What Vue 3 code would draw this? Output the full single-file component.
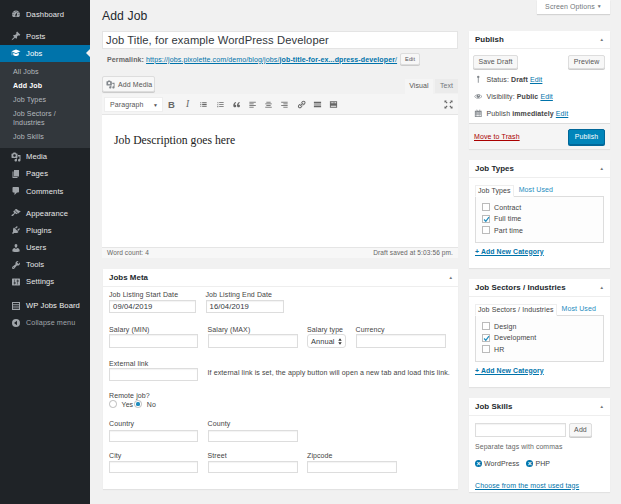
<script setup>
const ic = {
  dashboard: 'M3.76 16h12.48c1.1-1.37 1.76-3.11 1.76-5 0-4.42-3.58-8-8-8s-8 3.58-8 8c0 1.89.66 3.63 1.76 5zM10 4c.55 0 1 .45 1 1s-.45 1-1 1-1-.45-1-1 .45-1 1-1zM6 6c.55 0 1 .45 1 1s-.45 1-1 1-1-.45-1-1 .45-1 1-1zm8 0c.55 0 1 .45 1 1s-.45 1-1 1-1-.45-1-1 .45-1 1-1zm-5.37 5.55L12 7v6c0 1.1-.9 2-2 2s-2-.9-2-2c0-.57.24-1.08.63-1.45zM4 10c.55 0 1 .45 1 1s-.45 1-1 1-1-.45-1-1 .45-1 1-1zm12 0c.55 0 1 .45 1 1s-.45 1-1 1-1-.45-1-1 .45-1 1-1zm-5 3c0-.55-.45-1-1-1s-1 .45-1 1 .45 1 1 1 1-.45 1-1z',
  pin: 'M10.44 3.02l1.82-1.82 6.36 6.35-1.83 1.82c-1.05-.68-2.48-.57-3.41.36l-.75.75c-.92.93-1.04 2.35-.35 3.41l-1.83 1.82-2.41-2.41-2.8 2.79c-.42.42-3.38 2.71-3.8 2.29s1.86-3.39 2.28-3.81l2.79-2.79L4.1 9.36l1.83-1.82c1.05.69 2.48.57 3.4-.36l.75-.75c.93-.92 1.05-2.35.36-3.41z',
  learn: 'M10 10.5 1 6.5 10 3l9 3.5zM4.5 9.5 10 12l5.5-2.5V14c-1.5 1.5-3.5 2-5.5 2s-4-.5-5.5-2zM2.5 8v6.5h-1V7.5z',
  media: 'M13 11V4c0-.55-.45-1-1-1h-1.67L9 1H5L3.67 3H2c-.55 0-1 .45-1 1v7c0 .55.45 1 1 1h10c.55 0 1-.45 1-1zM7 4.5c1.38 0 2.5 1.12 2.5 2.5S8.38 9.5 7 9.5 4.5 8.38 4.5 7 5.62 4.5 7 4.5zM14 6h5v10.5c0 1.38-1.12 2.5-2.5 2.5S14 17.88 14 16.5s1.12-2.5 2.5-2.5c.17 0 .34.02.5.05V9h-3V6zm-4 8.05V13h2v3.5c0 1.38-1.12 2.5-2.5 2.5S7 17.88 7 16.5 8.12 14 9.5 14c.17 0 .34.02.5.05z',
  pages: 'M6 15V2h10v13H6zm-1 1h8v2H3V5h2v11z',
  comments: 'M5 2h9c1.1 0 2 .9 2 2v7c0 1.1-.9 2-2 2h-2l-5 5v-5H5c-1.1 0-2-.9-2-2V4c0-1.1.9-2 2-2z',
  brush: 'M14.48 11.06L7.41 3.99l1.5-1.5c.5-.56 2.3-.47 3.51.32 1.21.8 1.43 1.28 2.91 2.1 1.18.64 2.45 1.26 4.45.85zm-.71.71L6.7 4.7 4.93 6.47c-.39.39-.39 1.02 0 1.41l1.06 1.06c.39.39.39 1.03 0 1.42-.6.6-1.43 1.11-2.21 1.69-.35.26-.7.53-1.01.84C1.43 13.23.4 14.89 1.3 15.8c.9.9 2.57-.13 3.91-1.47.31-.31.58-.66.84-1.01.58-.78 1.09-1.61 1.69-2.21.39-.39 1.02-.39 1.41 0l1.06 1.06c.39.39 1.02.39 1.41 0z',
  plugins: 'M13.11 4.36L9.87 7.6 8 5.73l3.24-3.24c.35-.34 1.05-.2 1.56.32.52.51.66 1.21.31 1.55zm-8 1.77l.91-1.12 9.01 9.01-1.19.84c-.71.71-2.63 1.16-3.82 1.16H6.14L4.9 17.26c-.59.59-1.54.59-2.12 0-.59-.58-.59-1.53 0-2.12l1.24-1.24v-3.88c0-1.13.4-3.19 1.09-3.89zm7.26 3.97l3.24-3.24c.34-.35 1.04-.21 1.55.31.52.51.66 1.21.31 1.55l-3.24 3.25z',
  users: 'M10 9.25c-2.27 0-2.73-3.44-2.73-3.44C7 4.02 7.82 2 9.97 2c2.16 0 2.98 2.02 2.71 3.81 0 0-.41 3.44-2.68 3.44zm0 2.57L12.72 10c2.39 0 4.52 2.33 4.52 4.53v2.49s-3.65 1.13-7.24 1.13c-3.65 0-7.24-1.13-7.24-1.13v-2.49c0-2.25 1.94-4.48 4.47-4.48z',
  tools: 'M16.68 9.77c-1.34 1.34-3.3 1.67-4.95.99l-5.41 6.52c-.99.99-2.59.99-3.58 0s-.99-2.59 0-3.57l6.52-5.42c-.68-1.65-.35-3.61.99-4.95 1.28-1.28 3.12-1.62 4.72-1.06l-2.89 2.89 2.82 2.82 2.86-2.87c.53 1.58.18 3.39-1.08 4.65zM3.81 16.21c.4.39 1.04.39 1.43 0 .4-.4.4-1.04 0-1.43-.39-.4-1.03-.4-1.43 0-.39.39-.39 1.03 0 1.43z',
  settings: 'M18 16V4c0-.55-.45-1-1-1H3c-.55 0-1 .45-1 1v12c0 .55.45 1 1 1h14c.55 0 1-.45 1-1zM8 11h1c.55 0 1 .45 1 1s-.45 1-1 1H8v1.5c0 .28-.22.5-.5.5s-.5-.22-.5-.5V13H6c-.55 0-1-.45-1-1s.45-1 1-1h1V5.5c0-.28.22-.5.5-.5s.5.22.5.5V11zm5-2h-1c-.55 0-1-.45-1-1s.45-1 1-1h1V5.5c0-.28.22-.5.5-.5s.5.22.5.5V7h1c.55 0 1 .45 1 1s-.45 1-1 1h-1v5.5c0 .28-.22.5-.5.5s-.5-.22-.5-.5V9z',
  board: 'M2 2h16v16H2zM4 4v2h12V4zM4 7.5v2h12v-2zM4 11v2h12v-2zM4 14.5V16h12v-1.5z',
  collapse: 'M10 2a8 8 0 1 1 0 16 8 8 0 0 1 0-16zm2 3.5L6 10l6 4.5z',
  pinStatus: 'M10 1.5a3 3 0 0 1 1 5.8V18.5H9V7.3a3 3 0 0 1 1-5.8z',
  eye: 'M18.3 9.5C15 4.9 8.5 3.8 3.9 7.2c-1.2.9-2.2 2.1-3 3.4.2.4.5.8.8 1.2 3.3 4.6 9.6 5.6 14.2 2.4.9-.7 1.7-1.4 2.4-2.4.3-.4.5-.8.8-1.2-.2-.4-.5-.7-.8-1.1zm-8.2-2.3c.5-.5 1.3-.5 1.8 0s.5 1.3 0 1.8-1.3.5-1.8 0c-.5-.4-.5-1.3 0-1.8zm-.1 7.7c-3.1 0-6-1.6-7.7-4.2C3.5 9 5.1 7.8 7 7.2c-.7.8-1 1.7-1 2.7 0 2.2 1.7 4.1 4 4.1 2.2 0 4.1-1.7 4.1-4 0-1-.4-2-1.1-2.8 1.9.6 3.5 1.8 4.7 3.5-1.7 2.6-4.6 4.2-7.7 4.2z',
  calendar: 'M15 4h3v15H2V4h3V3c0-.41.15-.76.44-1.06.29-.29.65-.44 1.06-.44s.77.15 1.06.44c.29.3.44.65.44 1.06v1h4V3c0-.41.15-.76.44-1.06.29-.29.65-.44 1.06-.44s.77.15 1.06.44c.29.3.44.65.44 1.06v1zM6 5.5c.28 0 .5-.22.5-.5V3c0-.28-.22-.5-.5-.5s-.5.22-.5.5v2c0 .28.22.5.5.5zm8 0c.28 0 .5-.22.5-.5V3c0-.28-.22-.5-.5-.5s-.5.22-.5.5v2c0 .28.22.5.5.5zM4 8v2h2V8zm3 0v2h2V8zm3 0v2h2V8zm3 0v2h3V8zM4 11v2h2v-2zm3 0v2h2v-2zm3 0v2h2v-2zm3 0v2h3v-2zM4 14v3h2v-3zm3 0v3h2v-3zm3 0v3h2v-3zm3 0v3h3v-3z',
  quote: 'M9.49 13.22c0-.74-.2-1.38-.61-1.9-.62-.78-1.83-.88-2.53-.72-.29-1.65 1.11-3.75 2.92-4.65L7.88 4.5c-2.73 1.3-5.42 4.28-4.96 8.05C3.21 14.92 4.59 16 6.1 16c1.87 0 3.39-1.02 3.39-2.78zm8.19 0c0-.74-.2-1.38-.61-1.9-.63-.78-1.83-.88-2.53-.72-.29-1.65 1.11-3.75 2.92-4.65L16.07 4.5c-2.73 1.3-5.41 4.28-4.95 8.05.29 2.37 1.67 3.45 3.17 3.45 1.88 0 3.39-1.02 3.39-2.78z',
  link: 'M17.74 2.76c1.68 1.69 1.68 4.41 0 6.1l-1.53 1.52c-1.12 1.12-2.7 1.47-4.14 1.09l2.62-2.61.76-.77.76-.76c.84-.84.84-2.2 0-3.04-.84-.85-2.2-.85-3.04 0l-.77.76-3.38 3.38c-.37-1.44-.02-3.02 1.1-4.14l1.52-1.53c1.69-1.68 4.42-1.68 6.1 0zM8.59 13.43l5.34-5.34c.42-.42.42-1.1 0-1.52-.44-.43-1.13-.39-1.53 0l-5.33 5.34c-.42.42-.42 1.1 0 1.52.44.43 1.13.39 1.52 0zm-.76 2.29l4.14-4.15c.38 1.44.03 3.02-1.09 4.14l-1.52 1.53c-1.69 1.68-4.41 1.68-6.1 0-1.68-1.68-1.68-4.42 0-6.1l1.53-1.52c1.12-1.12 2.7-1.47 4.14-1.1l-4.14 4.15c-.85.84-.85 2.2 0 3.05.84.84 2.2.84 3.04 0z',
  expand: 'M1 1h5L4.5 2.5 8 6 6 8 2.5 4.5 1 6zM19 1v5l-1.5-1.5L14 8l-2-2 3.5-3.5L14 1zM1 19v-5l1.5 1.5L6 12l2 2-3.5 3.5L6 19zM19 19h-5l1.5-1.5L12 14l2-2 3.5 3.5L19 14z'
}

const menuTop = [
  { label: 'Dashboard', icon: ic.dashboard, cls: 'mt-5' },
  { label: 'Posts', icon: ic.pin, cls: 'mt-5' }
]
const subMenu = ['All Jobs', 'Add Job', 'Job Types', 'Job Sectors / Industries', 'Job Skills']
const menuBottom = [
  { label: 'Media', icon: ic.media },
  { label: 'Pages', icon: ic.pages },
  { label: 'Comments', icon: ic.comments },
  { label: 'Appearance', icon: ic.brush, cls: 'mt-5' },
  { label: 'Plugins', icon: ic.plugins },
  { label: 'Users', icon: ic.users },
  { label: 'Tools', icon: ic.tools },
  { label: 'Settings', icon: ic.settings },
  { label: 'WP Jobs Board', icon: ic.board, cls: 'mt-6', strong: true },
  { label: 'Collapse menu', icon: ic.collapse, dim: true }
]
const alignLines = {
  left: [12, 8, 12, 8],
  center: [8, 12, 8, 12],
  right: [12, 8, 12, 8]
}
const categories = [
  { title: 'Job Types', tab: 'Job Types', items: [['Contract', false], ['Full time', true], ['Part time', false]] },
  { title: 'Job Sectors / Industries', tab: 'Job Sectors / Industries', items: [['Design', false], ['Development', true], ['HR', false]] }
]
</script>

<template>
  <div class="page">
    <aside class="sidebar">
      <div v-for="m in menuTop" :key="m.label" class="menu-item" :class="m.cls">
        <svg viewBox="0 0 20 20"><path :d="m.icon" /></svg>{{ m.label }}
      </div>
      <div class="menu-item active">
        <svg viewBox="0 0 20 20"><path :d="ic.learn" /></svg>Jobs
      </div>
      <div class="submenu">
        <div v-for="s in subMenu" :key="s" class="sub-item" :class="{ current: s === 'Add Job' }">{{ s }}</div>
      </div>
      <div
        v-for="m in menuBottom"
        :key="m.label"
        class="menu-item"
        :class="[m.cls, { dim: m.dim, strong: m.strong }]"
      >
        <svg viewBox="0 0 20 20"><path :d="m.icon" fill-rule="evenodd" /></svg>{{ m.label }}
      </div>
    </aside>

    <div class="content">
      <div class="screen-options">Screen Options <span class="caret">▼</span></div>
      <div class="columns">
        <main class="main-col">
          <h1>Add Job</h1>
          <div class="title-input">Job Title, for example WordPress Developer</div>
          <div class="permalink">
            <b>Permalink:</b>
            <a>https://jobs.pixolette.com/demo/blog/jobs/<b>job-title-for-ex...dpress-developer</b>/</a>
            <span class="btn tiny">Edit</span>
          </div>

          <div class="editor-top">
            <span class="btn media-btn">
              <svg viewBox="0 0 20 20"><path :d="ic.media" /></svg>Add Media
            </span>
            <div class="tabs">
              <span class="tab on">Visual</span>
              <span class="tab">Text</span>
            </div>
          </div>
          <div class="toolbar">
            <span class="format">Paragraph<i class="caret">▼</i></span>
            <b class="tool bold">B</b>
            <i class="tool ital">I</i>
            <svg class="tool" viewBox="0 0 20 20"><path d="M3 5h2v2H3zM7 5h10v2H7zM3 9h2v2H3zM7 9h10v2H7zM3 13h2v2H3zM7 13h10v2H7z" /></svg>
            <svg class="tool" viewBox="0 0 20 20"><path d="M3 4.5h2v3H4V5.5H3zM7 5h10v1.5H7zM3 9h2v1.5H3zM7 9.5h10V11H7zM3 13h2v3H3zM7 14h10v1.5H7z" /></svg>
            <svg class="tool" viewBox="0 0 20 20"><path :d="ic.quote" /></svg>
            <svg v-for="(lines, name) in alignLines" :key="name" class="tool" viewBox="0 0 20 20">
              <rect
                v-for="(w, i) in lines"
                :key="i"
                :x="name === 'left' ? 3 : name === 'center' ? 10 - w * .6 : 17 - w * 1.2"
                :y="4 + i * 3.7"
                :width="w * 1.2"
                height="1.8"
              />
            </svg>
            <svg class="tool" viewBox="0 0 20 20"><path :d="ic.link" /></svg>
            <svg class="tool" viewBox="0 0 20 20"><path d="M2 4h16v4H2zM2 9.5h16v1.2H2zM2 12h16v4H2z" /></svg>
            <svg class="tool" viewBox="0 0 20 20"><path d="M2 3h16v14H2zM4 5v2h2V5zm3 0v2h2V5zm3 0v2h2V5zm3 0v2h3V5zM4 13v2h12v-2z" fill-rule="evenodd" /></svg>
            <svg class="tool expand" viewBox="0 0 20 20"><path :d="ic.expand" /></svg>
          </div>
          <div class="editor-body">Job Description goes here</div>
          <div class="statusbar">
            <span>Word count: 4</span>
            <span>Draft saved at 5:03:56 pm.</span>
          </div>

          <section class="box meta">
            <header class="box-head">Jobs Meta<span class="toggle">▲</span></header>
            <div class="meta-body">
              <div class="row dates">
                <label class="field w87">Job Listing Start Date<span class="input val">09/04/2019</span></label>
                <label class="field w78">Job Listing End Date<span class="input val">16/04/2019</span></label>
              </div>
              <div class="row salary">
                <label class="field w89">Salary (MIN)<span class="input" /></label>
                <label class="field w90">Salary (MAX)<span class="input" /></label>
                <label class="field w39">Salary type
                  <span class="select">Annual<svg viewBox="0 0 6 10"><path d="M3 0l2.6 4H.4zM3 10L.4 6h5.2z" /></svg></span>
                </label>
                <label class="field w90">Currency<span class="input" /></label>
              </div>
              <div class="row external">
                <label class="field w89">External link<span class="input" /></label>
                <p class="hint">If external link is set, the apply button will open a new tab and load this link.</p>
              </div>
              <div class="remote">
                <div>Remote job?</div>
                <div class="radios">
                  <span class="radio" /><span class="radio-label">Yes</span>
                  <span class="radio on" /><span>No</span>
                </div>
              </div>
              <div class="row country">
                <label class="field w89">Country<span class="input" /></label>
                <label class="field w90">County<span class="input" /></label>
              </div>
              <div class="row city">
                <label class="field w89">City<span class="input" /></label>
                <label class="field w90">Street<span class="input" /></label>
                <label class="field w90">Zipcode<span class="input" /></label>
              </div>
            </div>
          </section>
        </main>

        <aside class="side-col">
          <section class="box publish">
            <header class="box-head">Publish<span class="toggle">▲</span></header>
            <div class="pub-actions">
              <span class="btn">Save Draft</span>
              <span class="btn preview">Preview</span>
            </div>
            <div class="pub-row">
              <svg viewBox="0 0 20 20"><path :d="ic.pinStatus" /></svg>
              <span>Status: <b>Draft</b> <a>Edit</a></span>
            </div>
            <div class="pub-row">
              <svg viewBox="0 0 20 20"><path :d="ic.eye" /></svg>
              <span>Visibility: <b>Public</b> <a>Edit</a></span>
            </div>
            <div class="pub-row">
              <svg viewBox="0 0 20 20"><path :d="ic.calendar" fill-rule="evenodd" /></svg>
              <span>Publish <b>immediately</b> <a>Edit</a></span>
            </div>
            <div class="pub-foot">
              <a class="trash">Move to Trash</a>
              <span class="btn primary">Publish</span>
            </div>
          </section>

          <section v-for="c in categories" :key="c.title" class="box cat">
            <header class="box-head">{{ c.title }}<span class="toggle">▲</span></header>
            <div class="cat-body">
              <div class="cat-tabs">
                <span class="cat-tab">{{ c.tab }}</span>
                <a>Most Used</a>
              </div>
              <div class="cat-panel">
                <div v-for="[name, on] in c.items" :key="name" class="check-row">
                  <span class="check">
                    <svg v-if="on" viewBox="0 0 10 10"><path d="M1.5 5 4 7.5 8.5 1.5" /></svg>
                  </span>{{ name }}
                </div>
              </div>
              <a class="add-new">+ Add New Category</a>
            </div>
          </section>

          <section class="box skills">
            <header class="box-head">Job Skills<span class="toggle">▲</span></header>
            <div class="skills-body">
              <div class="skill-add">
                <span class="input skill-input" />
                <span class="btn add-btn">Add</span>
              </div>
              <p class="sep">Separate tags with commas</p>
              <div class="tags">
                <span class="tag"><i class="x">×</i>WordPress</span>
                <span class="tag"><i class="x">×</i>PHP</span>
              </div>
              <a class="choose">Choose from the most used tags</a>
            </div>
          </section>
        </aside>
      </div>
    </div>
  </div>
</template>

<style>
html, body { margin: 0; background: #f1f1f1; }
</style>

<style scoped>
.page {
  display: flex;
  width: 621px;
  height: 504px;
  overflow: hidden;
  background: #f1f1f1;
  color: #444;
  font-family: "Liberation Sans", Arial, sans-serif;
  font-size: 7px;
  letter-spacing: 0.1px;
}

.sidebar {
  flex: 0 0 90px;
  background: #1f2327;
  color: #e6e7e8;
  padding-top: 0.5px;
}
.menu-item {
  display: flex;
  align-items: center;
  height: 17.2px;
  padding-left: 11px;
  gap: 5px;
  font-size: 7.6px;
  position: relative;
}
.menu-item svg {
  width: 10px;
  height: 10px;
  fill: #9fa4a9;
  flex: none;
}
.mt-5 { margin-top: 5px; }
.mt-6 { margin-top: 6.5px; }
.active { background: #0073aa; color: #fff; }
.active svg { fill: #fff; }
.active::after {
  content: '';
  position: absolute;
  right: 0;
  top: 4px;
  border: 4.5px solid transparent;
  border-right-color: #f1f1f1;
  border-left-width: 0;
}
.dim { color: #a0a5aa; font-size: 7.2px; }
.strong { color: #f0f0f0; }
.submenu {
  background: #32373c;
  color: #b4b9be;
  padding: 3px 8px 5px 13px;
  height: 86px;
  box-sizing: border-box;
}
.sub-item { font-size: 7.1px; line-height: 9px; padding: 2.5px 0; }
.current { color: #fff; font-weight: 700; }

.content {
  flex: 1;
  position: relative;
  min-width: 0;
}
.screen-options {
  position: absolute;
  right: 11px;
  top: 0;
  width: 73px;
  height: 14px;
  box-sizing: border-box;
  background: #fff;
  box-shadow: 0 1px 1px rgba(0, 0, 0, 0.12);
  color: #72777c;
  line-height: 13px;
  text-align: center;
  font-size: 7px;
}
.caret { font-size: 5px; font-style: normal; vertical-align: 1px; }
.columns {
  display: flex;
  gap: 11px;
  padding-left: 12px;
}
.main-col { width: 356px; flex: none; }
.side-col { width: 141px; flex: none; padding-top: 31px; }

h1 {
  margin: 0;
  height: 31px;
  font-weight: 400;
  font-size: 12.2px;
  line-height: 32px;
  color: #23282d;
}
.title-input {
  height: 18px;
  box-sizing: border-box;
  background: #fff;
  border: 1px solid #e4e4e4;
  padding-left: 3px;
  color: #32373c;
  font-size: 11.2px;
  line-height: 16px;
}
.permalink {
  display: flex;
  align-items: center;
  margin-top: 4px;
  height: 12px;
  padding-left: 5px;
  gap: 2px;
  color: #666;
  font-size: 7.05px;
  white-space: nowrap;
}
a { color: #0073aa; text-decoration: underline; }
.btn {
  display: inline-block;
  box-sizing: border-box;
  background: #f7f7f7;
  border: 1px solid #ddd;
  border-radius: 2px;
  box-shadow: 0 1px 0 #ccc;
  color: #555;
  text-align: center;
  white-space: nowrap;
}
.tiny {
  margin-left: 1px;
  width: 20px;
  height: 12px;
  line-height: 10px;
  font-size: 5.6px;
}
.editor-top {
  display: flex;
  justify-content: space-between;
  align-items: flex-end;
  margin-top: 11px;
  height: 18px;
}
.media-btn {
  display: flex;
  align-items: center;
  gap: 3px;
  align-self: flex-start;
  width: 53px;
  height: 16px;
  padding-left: 3px;
  font-size: 7px;
}
.media-btn svg { width: 9px; height: 9px; fill: #82878c; }
.tabs { display: flex; gap: 2px; }
.tab {
  width: 23px;
  height: 14px;
  line-height: 14px;
  text-align: center;
  background: #ebebeb;
  color: #72777c;
  font-size: 7px;
}
.tab.on { width: 28px; height: 15px; background: #f5f5f5; color: #555; }
.toolbar {
  display: flex;
  align-items: center;
  height: 21px;
  background: #f5f5f5;
  border-bottom: 1px solid #e5e5e5;
  box-sizing: border-box;
  padding: 1px 0 0 3px;
}
.format {
  display: flex;
  justify-content: space-between;
  align-items: center;
  box-sizing: border-box;
  width: 57px;
  height: 13px;
  padding: 0 4px 0 5px;
  margin-right: 1px;
  background: #fff;
  color: #555;
  font-size: 7px;
  box-shadow: 0 0 0 1px #eee;
}
.tool {
  width: 9px;
  height: 9px;
  margin: 0 3.6px;
  fill: #666;
  flex: none;
  text-align: center;
  font-family: "Liberation Serif", serif;
  font-size: 9.5px;
  line-height: 9px;
  color: #666;
}
.bold { font-family: "Liberation Sans", sans-serif; margin-left: 4px; }
.expand { margin-left: auto; margin-right: 5px; }
.editor-body {
  height: 132px;
  box-sizing: border-box;
  background: #fff;
  padding: 18px 0 0 12px;
  color: #222;
  font-family: "Liberation Serif", serif;
  font-size: 11.7px;
  line-height: 16px;
  letter-spacing: 0;
}
.statusbar {
  display: flex;
  justify-content: space-between;
  height: 11px;
  line-height: 10px;
  padding: 0 5px;
  background: #f7f7f7;
  border-top: 1px solid #e5e5e5;
  box-sizing: border-box;
  font-size: 6.55px;
  color: #666;
}

.box {
  background: #fff;
  box-shadow: 0 1px 1px rgba(0, 0, 0, 0.06);
}
.box-head {
  display: flex;
  justify-content: space-between;
  align-items: center;
  height: 17.5px;
  box-sizing: border-box;
  padding: 0 6px;
  border-bottom: 1px solid #eee;
  color: #23282d;
  font-size: 7.9px;
  font-weight: 700;
  letter-spacing: 0.05px;
}
.toggle { font-size: 4.5px; color: #72777c; font-weight: 400; }

.meta {
  margin: 11px 0 0 1px;
  height: 220px;
}
.meta .box-head { padding: 0 5px 0 6px; }
.meta-body { padding: 3px 0 0 6px; }
.row { display: flex; gap: 9.5px; }
.field {
  display: flex;
  flex-direction: column;
  gap: 2px;
  flex: none;
  line-height: 9px;
  font-size: 7px;
  white-space: nowrap;
}
.w87 { width: 87px; }
.w78 { width: 78px; }
.w89 { width: 89px; }
.w90 { width: 90px; }
.w39 { width: 39px; }
.input {
  display: block;
  box-sizing: border-box;
  height: 13px;
  background: #fff;
  border: 1px solid #ddd;
  box-shadow: inset 0 1px 1px rgba(0, 0, 0, 0.05);
}
.val { padding-left: 3px; line-height: 11px; color: #32373c; font-size: 7.7px; }
.dates .field { gap: 1.5px; }
.salary { margin-top: 11.5px; }
.salary .field { gap: 0.5px; }
.salary .input { height: 14px; }
.select {
  display: flex;
  justify-content: space-between;
  align-items: center;
  box-sizing: border-box;
  height: 14px;
  padding: 0 3px;
  background: #fff;
  border: 1px solid #ddd;
  border-radius: 3px;
  color: #32373c;
  font-size: 7.4px;
}
.select svg { width: 4px; height: 7px; fill: #333; }
.external { margin-top: 10.5px; }
.external .field { gap: 0; }
.hint {
  margin: 9px 0 0;
  white-space: nowrap;
  font-size: 7.05px;
  line-height: 9px;
}
.remote { margin-top: 10px; line-height: 9px; font-size: 7px; }
.radios {
  display: flex;
  align-items: center;
  gap: 5px;
  height: 9px;
  line-height: 9px;
}
.radio {
  box-sizing: border-box;
  width: 7.5px;
  height: 7.5px;
  border: 1px solid #bbb;
  border-radius: 50%;
  background: #fff;
  position: relative;
}
.radio.on::after {
  content: '';
  position: absolute;
  inset: 1.2px;
  border-radius: 50%;
  background: #1e8cbe;
}
.radio-label { margin-right: -4px; }
.country { margin-top: 10px; }
.country .input, .city .input { height: 12px; }
.city { margin-top: 9px; }
.city .field { gap: 1px; }

.publish { height: 118px; display: flex; flex-direction: column; }
.pub-actions {
  display: flex;
  justify-content: space-between;
  padding: 6px 5px 0 4px;
  height: 20px;
  box-sizing: border-box;
  margin-bottom: 2px;
}
.pub-actions .btn { height: 14px; line-height: 12px; width: 45px; }
.pub-actions .preview { width: 37px; }
.pub-row {
  display: flex;
  align-items: center;
  height: 17px;
  padding-left: 5px;
  gap: 4px;
  font-size: 7px;
  white-space: pre;
}
.pub-row svg { width: 8.5px; height: 8.5px; fill: #82878c; flex: none; }
.pub-foot {
  display: flex;
  justify-content: space-between;
  align-items: center;
  margin-top: auto;
  height: 26px;
  box-sizing: border-box;
  padding: 0 5px;
  background: #f5f5f5;
  border-top: 1px solid #ddd;
}
.trash { color: #a00; font-size: 7px; }
.primary {
  width: 37px;
  height: 16px;
  line-height: 14px;
  background: #0085ba;
  border-color: #006799;
  box-shadow: 0 1px 0 #006799;
  color: #fff;
}

.cat { margin-top: 11px; height: 108px; }
.cat-body { padding: 6px 6px 0; }
.cat-tabs {
  display: flex;
  align-items: flex-end;
  gap: 5px;
  height: 12px;
  font-size: 7px;
  line-height: 10px;
}
.cat-tabs a { text-decoration: none; margin-bottom: 1px; color: #1e8cbe; }
.cat-tab {
  padding: 0 2px;
  height: 12px;
  box-sizing: border-box;
  border: 1px solid #eee;
  border-bottom-color: #fff;
  margin-bottom: -1px;
  position: relative;
}
.cat-panel {
  height: 47px;
  box-sizing: border-box;
  padding: 5px 0 0 6px;
  border: 1px solid #ddd;
  background: #fdfdfd;
}
.check-row {
  display: flex;
  align-items: center;
  gap: 4px;
  height: 11.5px;
  font-size: 7px;
}
.check {
  box-sizing: border-box;
  width: 8px;
  height: 8px;
  border: 1px solid #bbb;
  background: #fff;
  flex: none;
}
.check svg {
  display: block;
  width: 7px;
  height: 7px;
  fill: none;
  stroke: #1e8cbe;
  stroke-width: 1.7;
}
.add-new {
  display: block;
  margin-top: 5px;
  font-size: 6.9px;
  font-weight: 700;
}

.skills { margin-top: 11px; height: 94px; }
.skills-body { padding: 7px 6px 0; }
.skill-add { display: flex; gap: 3px; }
.skill-input { width: 91px; height: 14px; }
.add-btn { width: 23px; height: 14px; line-height: 12px; }
.sep { margin: 5px 0 0; line-height: 9px; font-size: 6.9px; color: #666; }
.tags { display: flex; gap: 7px; margin-top: 8px; line-height: 9px; font-size: 7px; }
.tag { display: flex; align-items: center; gap: 2px; }
.x {
  width: 7px;
  height: 7px;
  border-radius: 50%;
  background: #0073aa;
  color: #fff;
  font-style: normal;
  font-weight: 700;
  font-size: 7px;
  line-height: 7px;
  text-align: center;
}
.choose { display: block; margin-top: 13px; font-size: 7px; line-height: 9px; }
</style>
